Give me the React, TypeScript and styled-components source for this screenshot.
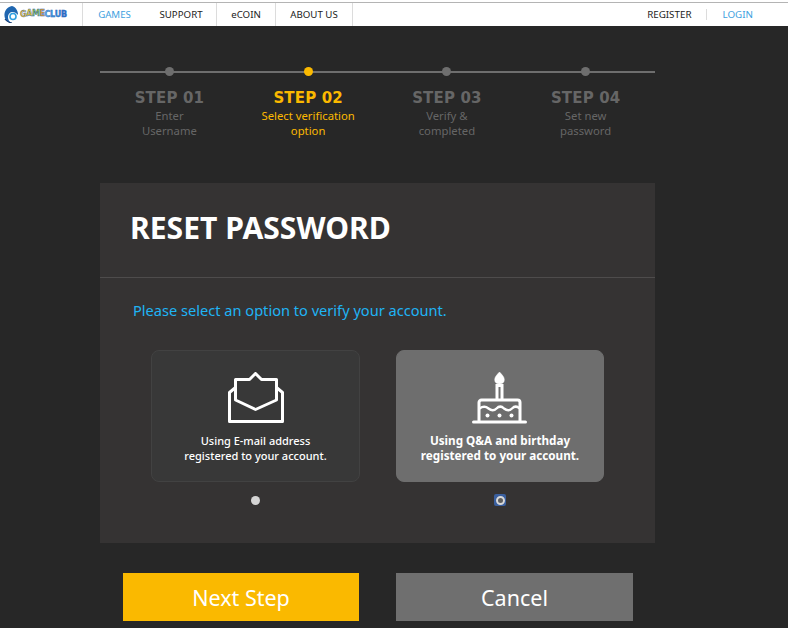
import React from 'react';
import styled, { createGlobalStyle } from 'styled-components';

const GlobalStyle = createGlobalStyle`
  html, body {
    margin: 0;
    padding: 0;
    height: 628px;
    overflow: hidden;
    background-color: #272727;
    font-family: "Noto Sans", "Open Sans", sans-serif;
  }
`;

const TopBar = styled.div`
  height: 26px;
  box-sizing: border-box;
  background: #fff;
  padding-top: 2px;
`;
const TopInner = styled.div`
  height: 24px;
  box-sizing: border-box;
  border-top: 1px solid #b4b4b4;
  display: flex;
  align-items: stretch;
  justify-content: space-between;
`;
const NavLeft = styled.div`
  display: flex;
  align-items: stretch;
`;
const LogoCell = styled.div`
  width: 82px;
  display: flex;
  align-items: center;
  padding-left: 4px;
  box-sizing: border-box;
  gap: 1px;
`;
const LogoText = styled.span`
  font-family: "DejaVu Sans", sans-serif;
  font-size: 8px;
  font-weight: 700;
  letter-spacing: -0.4px;
  display: flex;
  -webkit-text-stroke: 0.4px #2a62b4;
`;
const LogoLetter = styled.span<{ $c: string; $dy: number }>`
  color: ${p => p.$c};
  transform: translateY(${p => p.$dy}px);
`;
const NavCell = styled.div<{ $w: number; $border?: boolean }>`
  width: ${p => p.$w}px;
  box-sizing: border-box;
  border-left: ${p => (p.$border ? '1px solid #dcdcdc' : 'none')};
  display: flex;
  align-items: center;
  justify-content: center;
  font-size: 9.7px;
  color: #222;
`;
const NavRight = styled.div`
  display: flex;
  align-items: center;
  padding-right: 35px;
  font-size: 9.8px;
  color: #222;
`;
const BlueText = styled.span`
  color: #3e9fe0;
`;
const VSep = styled.span`
  width: 1px;
  height: 11px;
  background: #dcdcdc;
  margin: 0 16px 0 14px;
`;

const Main = styled.div`
  width: 555px;
  margin: 0 0 0 100px;
`;
const Steps = styled.div`
  position: relative;
  display: grid;
  grid-template-columns: repeat(4, 1fr);
  padding-top: 41px;
  height: 157px;
  box-sizing: border-box;
  &::before {
    content: '';
    position: absolute;
    left: 0;
    right: 0;
    top: 45px;
    height: 2px;
    background: #6e6e6e;
  }
`;
const Step = styled.div<{ $active?: boolean }>`
  display: flex;
  flex-direction: column;
  align-items: center;
  color: ${p => (p.$active ? '#fbb900' : '#666')};
`;
const Dot = styled.span<{ $active?: boolean }>`
  position: relative;
  width: 9px;
  height: 9px;
  border-radius: 50%;
  background: ${p => (p.$active ? '#fbb900' : '#6e6e6e')};
`;
const StepNum = styled.div`
  margin-top: 12px;
  font-family: "DejaVu Sans", sans-serif;
  font-size: 15px;
  font-weight: 700;
  line-height: 20px;
  letter-spacing: 0.15px;
`;
const StepText = styled.div`
  font-size: 11.3px;
  line-height: 15px;
  text-align: center;
`;

const Panel = styled.div`
  height: 360px;
  background: #353333;
`;
const PanelHead = styled.div`
  height: 95px;
  box-sizing: border-box;
  border-bottom: 1px solid #4e4c4c;
  padding: 24px 0 0 30px;
`;
const Title = styled.h1`
  margin: 0;
  font-size: 30.1px;
  line-height: 42px;
  font-weight: 700;
  color: #fff;
`;
const Prompt = styled.p`
  margin: 22px 0 0 33px;
  font-size: 14.6px;
  line-height: 20px;
  color: #1fb4f5;
`;
const Options = styled.div`
  display: flex;
  gap: 36px;
  margin: 30px 0 0 51px;
`;
const Option = styled.div`
  display: flex;
  flex-direction: column;
  align-items: center;
`;
const Card = styled.div<{ $on?: boolean }>`
  width: ${p => (p.$on ? 208 : 209)}px;
  height: 132px;
  box-sizing: border-box;
  border-radius: 8px;
  background: ${p => (p.$on ? '#6e6e6e' : '#383838')};
  border: 1px solid ${p => (p.$on ? '#6e6e6e' : '#424242')};
  display: flex;
  flex-direction: column;
  align-items: center;
  padding-top: 21px;
  color: #fff;
`;
const CardText = styled.div<{ $on?: boolean }>`
  margin-top: 9px;
  font-size: ${p => (p.$on ? 11.7 : 11)}px;
  line-height: 15px;
  text-align: center;
  font-weight: ${p => (p.$on ? 700 : 500)};
`;
const Radio = styled.span<{ $on?: boolean }>`
  margin-top: 12px;
  width: 12px;
  height: 12px;
  display: flex;
  align-items: center;
  justify-content: center;
  background: ${p => (p.$on ? '#3a5f9e' : 'transparent')};
  border-radius: 2px;
  &::after {
    content: '';
    box-sizing: border-box;
    width: 9px;
    height: 9px;
    border-radius: 50%;
    background: ${p => (p.$on ? '#5e5e5e' : '#d4d4d4')};
    border: ${p => (p.$on ? '2px solid #d8d8d8' : 'none')};
  }
`;

const Buttons = styled.div`
  display: flex;
  gap: 37px;
  margin: 30px 0 0 23px;
`;
const Button = styled.button<{ $primary?: boolean }>`
  height: 48px;
  width: ${p => (p.$primary ? 236 : 237)}px;
  border: none;
  padding: 0;
  background: ${p => (p.$primary ? '#fab900' : '#6f6f6f')};
  color: #fff;
  font-family: inherit;
  font-size: 21.5px;
  font-weight: 400;
`;

const Fish = () => (
  <svg width="15" height="17" viewBox="0 0 15 17">
    <path d="M8 0C3 1 0 5 0.500 10c.5 4 3 6.500 7 7-2.500-1.500-3.500-3.500-3.500-6 0-3 2-5 4.500-5 2 0 4 1 5.500 3C14 5 12 1 8 0z" fill="#1f66b0" />
    <circle cx="9" cy="10.500" r="3" fill="none" stroke="#2f9fe0" strokeWidth="1.600" />
    <path d="M1 13c1.500 2.500 4 3.500 7 4" fill="none" stroke="#173a70" strokeWidth="1.200" />
  </svg>
);

const MailIcon = () => (
  <svg width="56" height="52" viewBox="0 0 56 52" fill="none" stroke="#fff" strokeWidth="3" strokeLinejoin="round">
    <path d="M7.500 15.500 1.500 20.500V49.500H54.500V20.500L48.500 15.500" />
    <path d="M7.500 7.500H21.500L27.500 1.500L33.500 7.500H48.500V28L27.500 37.500L7.500 28Z" />
  </svg>
);

const CakeIcon = () => (
  <svg width="56" height="52" viewBox="0 0 56 52" fill="none" stroke="#fff" strokeWidth="3">
    <path d="M27.500 0c-2.800 3-4.800 5-4.800 7.800 0 2.900 2.200 4.200 4.800 4.200s4.800-1.300 4.800-4.200c0-2.800-2-4.800-4.800-7.800Z" fill="#fff" strokeWidth="0.500" />
    <path d="M25 28V13.500h5V28" />
    <path d="M7 50V30.500a2.500 2.500 0 0 1 2.500-2.500h36a2.500 2.500 0 0 1 2.500 2.500V50" />
    <path d="M1.500 50h52" strokeLinecap="round" />
    <path d="M7.500 36.500c3.500-2.500 6-2.500 9 0 3 2.500 5.500 2.500 8 0 2.500-2.500 5-2.500 7.500 0 3 2.500 5.500 2.500 8 0 2.500-2.500 5-2.500 7.500 0" strokeWidth="2.400" />
    <circle cx="15.500" cy="43.500" r="2" fill="#fff" stroke="none" />
    <circle cx="27.500" cy="43.500" r="2" fill="#fff" stroke="none" />
    <circle cx="39.500" cy="43.500" r="2" fill="#fff" stroke="none" />
  </svg>
);

const logoLetters: [string, string, number][] = [
  ['G', '#f0c020', 0], ['A', '#e8c828', -1], ['M', '#8cbc40', -1], ['E', '#e8a020', -1],
  ['C', '#58b0ea', 0], ['L', '#3f9ce4', 0], ['U', '#3488dc', 0], ['B', '#2a70cc', 0],
];

const steps = [
  { num: 'STEP 01', lines: ['Enter', 'Username'] },
  { num: 'STEP 02', lines: ['Select verification', 'option'], active: true },
  { num: 'STEP 03', lines: ['Verify &', 'completed'] },
  { num: 'STEP 04', lines: ['Set new', 'password'] },
];

function App() {
  return (
    <>
      <GlobalStyle />
      <TopBar>
        <TopInner>
          <NavLeft>
            <LogoCell>
              <Fish />
              <LogoText>
                {logoLetters.map(([l, c, dy], i) => (
                  <LogoLetter key={i} $c={c} $dy={dy}>{l}</LogoLetter>
                ))}
              </LogoText>
            </LogoCell>
            <NavCell $w={64} $border><BlueText>GAMES</BlueText></NavCell>
            <NavCell $w={70}>SUPPORT</NavCell>
            <NavCell $w={59} $border>eCOIN</NavCell>
            <NavCell $w={77} $border>ABOUT US</NavCell>
            <NavCell $w={1} $border />
          </NavLeft>
          <NavRight>
            REGISTER
            <VSep />
            <BlueText>LOGIN</BlueText>
          </NavRight>
        </TopInner>
      </TopBar>
      <Main>
        <Steps>
          {steps.map(s => (
            <Step key={s.num} $active={s.active}>
              <Dot $active={s.active} />
              <StepNum>{s.num}</StepNum>
              <StepText>{s.lines[0]}<br />{s.lines[1]}</StepText>
            </Step>
          ))}
        </Steps>
        <Panel>
          <PanelHead>
            <Title>RESET PASSWORD</Title>
          </PanelHead>
          <Prompt>Please select an option to verify your account.</Prompt>
          <Options>
            <Option>
              <Card>
                <MailIcon />
                <CardText>Using E-mail address<br />registered to your account.</CardText>
              </Card>
              <Radio />
            </Option>
            <Option>
              <Card $on>
                <CakeIcon />
                <CardText $on>Using Q&amp;A and birthday<br />registered to your account.</CardText>
              </Card>
              <Radio $on />
            </Option>
          </Options>
        </Panel>
        <Buttons>
          <Button $primary>Next Step</Button>
          <Button>Cancel</Button>
        </Buttons>
      </Main>
    </>
  );
}

export default App;
